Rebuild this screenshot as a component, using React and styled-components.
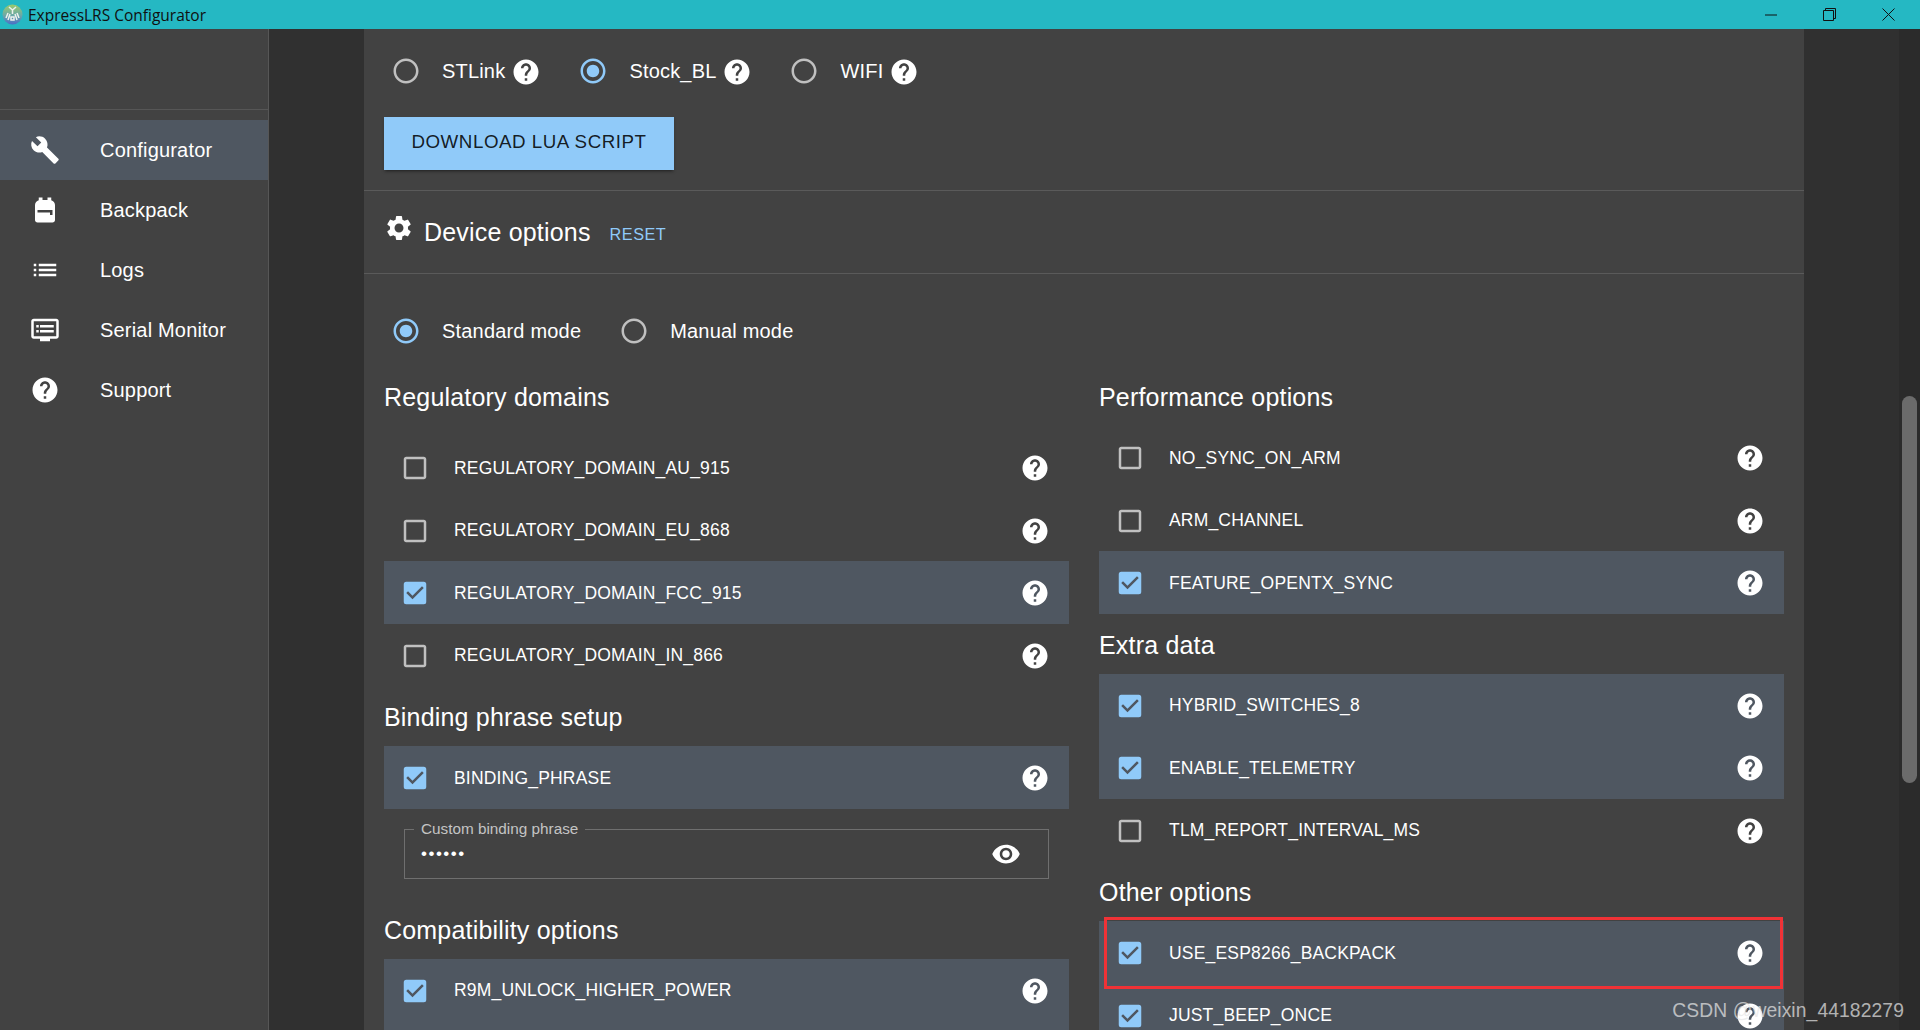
import React from 'react'
import styled, { createGlobalStyle } from 'styled-components'
import {
  MdBuild,
  MdBackpack,
  MdList,
  MdDvr,
  MdHelp,
  MdSettings,
  MdVisibility,
  MdRadioButtonChecked,
  MdRadioButtonUnchecked,
  MdCheckBox,
  MdCheckBoxOutlineBlank,
} from 'react-icons/md'

const GlobalStyle = createGlobalStyle`
  html, body {
    margin: 0;
    height: 100%;
    overflow: hidden;
    background: #303030;
    font-family: "Liberation Sans", Arial, sans-serif;
  }
  * { box-sizing: border-box; }
`

const Window = styled.div`
  display: flex;
  flex-direction: column;
  width: 1920px;
  height: 1030px;
  overflow: hidden;
  position: relative;
`

const TitleBar = styled.div`
  flex: 0 0 29px;
  display: flex;
  align-items: center;
  background: #25b8c3;
  padding-left: 2px;
`

const TitleText = styled.span`
  margin-left: 5px;
  font-family: "Open Sans", sans-serif;
  font-size: 15.5px;
  color: #101010;
`

const WindowButtons = styled.div`
  margin-left: auto;
  display: flex;
  align-items: center;
  gap: 46px;
  padding-right: 25px;
  svg { display: block; }
`

const Body = styled.div`
  flex: 1;
  min-height: 0;
  display: flex;
`

const Sidebar = styled.nav`
  flex: 0 0 269px;
  background: #424242;
  border-right: 1px solid #565656;
`

const SidebarTop = styled.div`
  height: 81px;
  border-bottom: 1px solid #565656;
`

const NavList = styled.div`
  padding-top: 10px;
`

const NavItem = styled.div`
  height: 60px;
  display: flex;
  align-items: center;
  padding-left: 30px;
  gap: 40px;
  color: #fff;
  font-size: 20px;
  letter-spacing: 0.1875px;
  background: ${p => (p.$active ? '#4f5761' : 'transparent')};
  svg { flex: none; }
`

const Stage = styled.div`
  flex: 1;
  min-width: 0;
  padding: 0 95px;
  background: #303030;
`

const Panel = styled.main`
  height: 100%;
  background: #424242;
  color: #fff;
  overflow: hidden;
`

const TopSection = styled.section`
  height: 162px;
  padding: 26px 20px 0;
  border-bottom: 1px solid #5a5a5a;
`

const RadioRow = styled.div`
  display: flex;
  align-items: center;
  padding-left: 7px;
  gap: ${p => p.$gap}px;
`

const RadioOption = styled.label`
  display: flex;
  align-items: center;
  color: #fff;
  font-size: 20px;
  letter-spacing: 0.1875px;
  svg { flex: none; }
`

const RadioIcon = styled.span`
  display: flex;
  margin-right: 21px;
  color: ${p => (p.$on ? '#90caf9' : '#c0c0c0')};
`

const InlineHelp = styled.span`
  display: flex;
  margin: 2px 0 0 6px;
  color: #fff;
`

const DownloadButton = styled.button`
  display: block;
  margin-top: 30px;
  width: 290px;
  height: 53px;
  border: 0;
  padding: 0 0 3px;
  background: #90caf9;
  color: rgba(0, 0, 0, 0.87);
  font-family: inherit;
  font-size: 18.75px;
  letter-spacing: 0.53px;
  box-shadow: 0 3px 2px -2px rgba(0, 0, 0, 0.3), 0 2px 3px rgba(0, 0, 0, 0.2);
`

const DeviceHeader = styled.section`
  height: 83px;
  padding: 0 20px;
  display: flex;
  align-items: center;
  border-bottom: 1px solid #5a5a5a;
`

const GearIcon = styled.span`
  display: flex;
  margin: 0 10px 8px 0;
  color: #fff;
`

const HeaderTitle = styled.h2`
  margin: 0;
  font-size: 25px;
  font-weight: 400;
  letter-spacing: 0.1875px;
`

const ResetLink = styled.a`
  margin: 4px 0 0 19px;
  color: #90caf9;
  font-size: 16.25px;
  letter-spacing: 0.5px;
`

const OptionsSection = styled.section`
  padding: 42px 20px 0;
`

const Columns = styled.div`
  display: grid;
  grid-template-columns: 685px 685px;
  column-gap: 30px;
  margin-top: 20px;
`

const Column = styled.div`
  min-width: 0;
`

const GroupTitle = styled.h3`
  margin: ${p => p.$top || 16}px 0 14px;
  height: 30px;
  line-height: 30px;
  font-size: 25px;
  font-weight: 400;
  letter-spacing: 0.1875px;
`

const CheckList = styled.div`
  padding-top: ${p => (p.$padded ? '10px' : '0')};
  margin-bottom: ${p => p.$after || 0}px;
`

const CheckRow = styled.div`
  position: relative;
  height: 62.5px;
  display: flex;
  align-items: center;
  padding: 2px 19px 0 16px;
  background: ${p => (p.$on ? '#4f5761' : 'transparent')};
  font-size: 17.5px;
  letter-spacing: 0.1875px;
  svg { flex: none; }
`

const CheckIcon = styled.span`
  display: flex;
  color: ${p => (p.$on ? '#90caf9' : '#c0c0c0')};
  margin-right: 24px;
`

const CheckLabel = styled.span`
  flex: 1;
`

const RowHelp = styled.span`
  display: flex;
  color: #fff;
`

const RedMark = styled.div`
  position: absolute;
  z-index: 1;
  left: 5px;
  right: 1px;
  top: -4px;
  height: 72px;
  border: 3px solid #f03236;
  pointer-events: none;
`

const PhraseField = styled.fieldset`
  position: relative;
  margin: 12px 20px 0 20px;
  height: 58px;
  padding: 0 16px;
  border: 1px solid #6f6f6f;
  display: flex;
  align-items: center;
  justify-content: space-between;
`

const PhraseLegend = styled.legend`
  padding: 0 7px;
  margin-left: -7px;
  height: 17px;
  line-height: 16px;
  font-size: 15.3px;
  color: #c4c4c4;
`

const PhraseDots = styled.span`
  font-size: 17px;
  color: #fff;
  letter-spacing: 1.5px;
  padding-bottom: 7px;
`

const EyeIcon = styled.span`
  display: flex;
  color: #fff;
  margin: 0 11px 8px 0;
`

const ScrollTrack = styled.div`
  flex: 0 0 21px;
  background: #2b2b2b;
  padding: 367px 3px 0;
`

const ScrollThumb = styled.div`
  width: 15px;
  height: 387px;
  border-radius: 8px;
  background: #6b6b6b;
`

const Watermark = styled.div`
  position: absolute;
  right: 16px;
  bottom: 8px;
  font-size: 19.3px;
  letter-spacing: 0.1px;
  color: rgba(230, 230, 230, 0.72);
`

const navItems = [
  { label: 'Configurator', Icon: MdBuild, active: true },
  { label: 'Backpack', Icon: MdBackpack },
  { label: 'Logs', Icon: MdList },
  { label: 'Serial Monitor', Icon: MdDvr },
  { label: 'Support', Icon: MdHelp },
]

function AppLogo() {
  return (
    <svg width="21" height="21" viewBox="0 0 21 21">
      <defs>
        <linearGradient id="logoFill" x1="0" y1="0" x2="0" y2="1">
          <stop offset="0" stopColor="#9ccb6c" />
          <stop offset="0.55" stopColor="#6aa8a8" />
          <stop offset="1" stopColor="#4a6fc8" />
        </linearGradient>
      </defs>
      <circle cx="10.5" cy="10.5" r="10" fill="url(#logoFill)" />
      <path d="M7 3l3.5 3L14 3M10.5 6v4M6 9l-2 5M15 9l2 5M8 10l-2 6M13 10l2 6M9 13h3v3H9z" stroke="#eef2ee" strokeWidth="1.5" fill="none" />
    </svg>
  )
}

function WindowControls() {
  return (
    <WindowButtons>
      <svg width="12" height="2" viewBox="0 0 12 2"><path d="M0 1h12" stroke="#111" strokeWidth="1" /></svg>
      <svg width="13" height="13" viewBox="0 0 13 13" fill="none" stroke="#111"><path d="M.5 2.5h10v10H.5zM2.5 2.5v-2h10v10h-2" /></svg>
      <svg width="13" height="13" viewBox="0 0 13 13" stroke="#111"><path d="M.5.5l12 12M12.5.5l-12 12" /></svg>
    </WindowButtons>
  )
}

function RadioChoice({ label, on, help }) {
  const Icon = on ? MdRadioButtonChecked : MdRadioButtonUnchecked
  return (
    <RadioOption>
      <RadioIcon $on={on}><Icon size={30} /></RadioIcon>
      <span>{label}</span>
      {help && <InlineHelp><MdHelp size={30} /></InlineHelp>}
    </RadioOption>
  )
}

function OptionRow({ label, on, marked }) {
  const Icon = on ? MdCheckBox : MdCheckBoxOutlineBlank
  return (
    <CheckRow $on={on}>
      <CheckIcon $on={on}><Icon size={30} /></CheckIcon>
      <CheckLabel>{label}</CheckLabel>
      <RowHelp><MdHelp size={30} /></RowHelp>
      {marked && <RedMark />}
    </CheckRow>
  )
}

export default function App() {
  return (
    <Window>
      <GlobalStyle />
      <TitleBar>
        <AppLogo />
        <TitleText>ExpressLRS Configurator</TitleText>
        <WindowControls />
      </TitleBar>
      <Body>
        <Sidebar>
          <SidebarTop />
          <NavList>
            {navItems.map(({ label, Icon, active }) => (
              <NavItem key={label} $active={active}>
                <Icon size={30} />
                <span>{label}</span>
              </NavItem>
            ))}
          </NavList>
        </Sidebar>
        <Stage>
          <Panel>
            <TopSection>
              <RadioRow $gap={37}>
                <RadioChoice label="STLink" help />
                <RadioChoice label="Stock_BL" on help />
                <RadioChoice label="WIFI" help />
              </RadioRow>
              <DownloadButton>DOWNLOAD LUA SCRIPT</DownloadButton>
            </TopSection>
            <DeviceHeader>
              <GearIcon><MdSettings size={30} /></GearIcon>
              <HeaderTitle>Device options</HeaderTitle>
              <ResetLink>RESET</ResetLink>
            </DeviceHeader>
            <OptionsSection>
              <RadioRow $gap={38}>
                <RadioChoice label="Standard mode" on />
                <RadioChoice label="Manual mode" />
              </RadioRow>
              <Columns>
                <Column>
                  <GroupTitle>Regulatory domains</GroupTitle>
                  <CheckList $padded $after={1}>
                    <OptionRow label="REGULATORY_DOMAIN_AU_915" />
                    <OptionRow label="REGULATORY_DOMAIN_EU_868" />
                    <OptionRow label="REGULATORY_DOMAIN_FCC_915" on />
                    <OptionRow label="REGULATORY_DOMAIN_IN_866" />
                  </CheckList>
                  <GroupTitle>Binding phrase setup</GroupTitle>
                  <CheckList>
                    <OptionRow label="BINDING_PHRASE" on />
                  </CheckList>
                  <PhraseField>
                    <PhraseLegend>Custom binding phrase</PhraseLegend>
                    <PhraseDots>••••••</PhraseDots>
                    <EyeIcon><MdVisibility size={30} /></EyeIcon>
                  </PhraseField>
                  <GroupTitle $top={36}>Compatibility options</GroupTitle>
                  <CheckList>
                    <OptionRow label="R9M_UNLOCK_HIGHER_POWER" on />
                    <OptionRow label="" on />
                  </CheckList>
                </Column>
                <Column>
                  <GroupTitle>Performance options</GroupTitle>
                  <CheckList>
                    <OptionRow label="NO_SYNC_ON_ARM" />
                    <OptionRow label="ARM_CHANNEL" />
                    <OptionRow label="FEATURE_OPENTX_SYNC" on />
                  </CheckList>
                  <GroupTitle>Extra data</GroupTitle>
                  <CheckList>
                    <OptionRow label="HYBRID_SWITCHES_8" on />
                    <OptionRow label="ENABLE_TELEMETRY" on />
                    <OptionRow label="TLM_REPORT_INTERVAL_MS" />
                  </CheckList>
                  <GroupTitle>Other options</GroupTitle>
                  <CheckList>
                    <OptionRow label="USE_ESP8266_BACKPACK" on marked />
                    <OptionRow label="JUST_BEEP_ONCE" on />
                  </CheckList>
                </Column>
              </Columns>
            </OptionsSection>
          </Panel>
        </Stage>
        <ScrollTrack>
          <ScrollThumb />
        </ScrollTrack>
      </Body>
      <Watermark>CSDN @weixin_44182279</Watermark>
    </Window>
  )
}
